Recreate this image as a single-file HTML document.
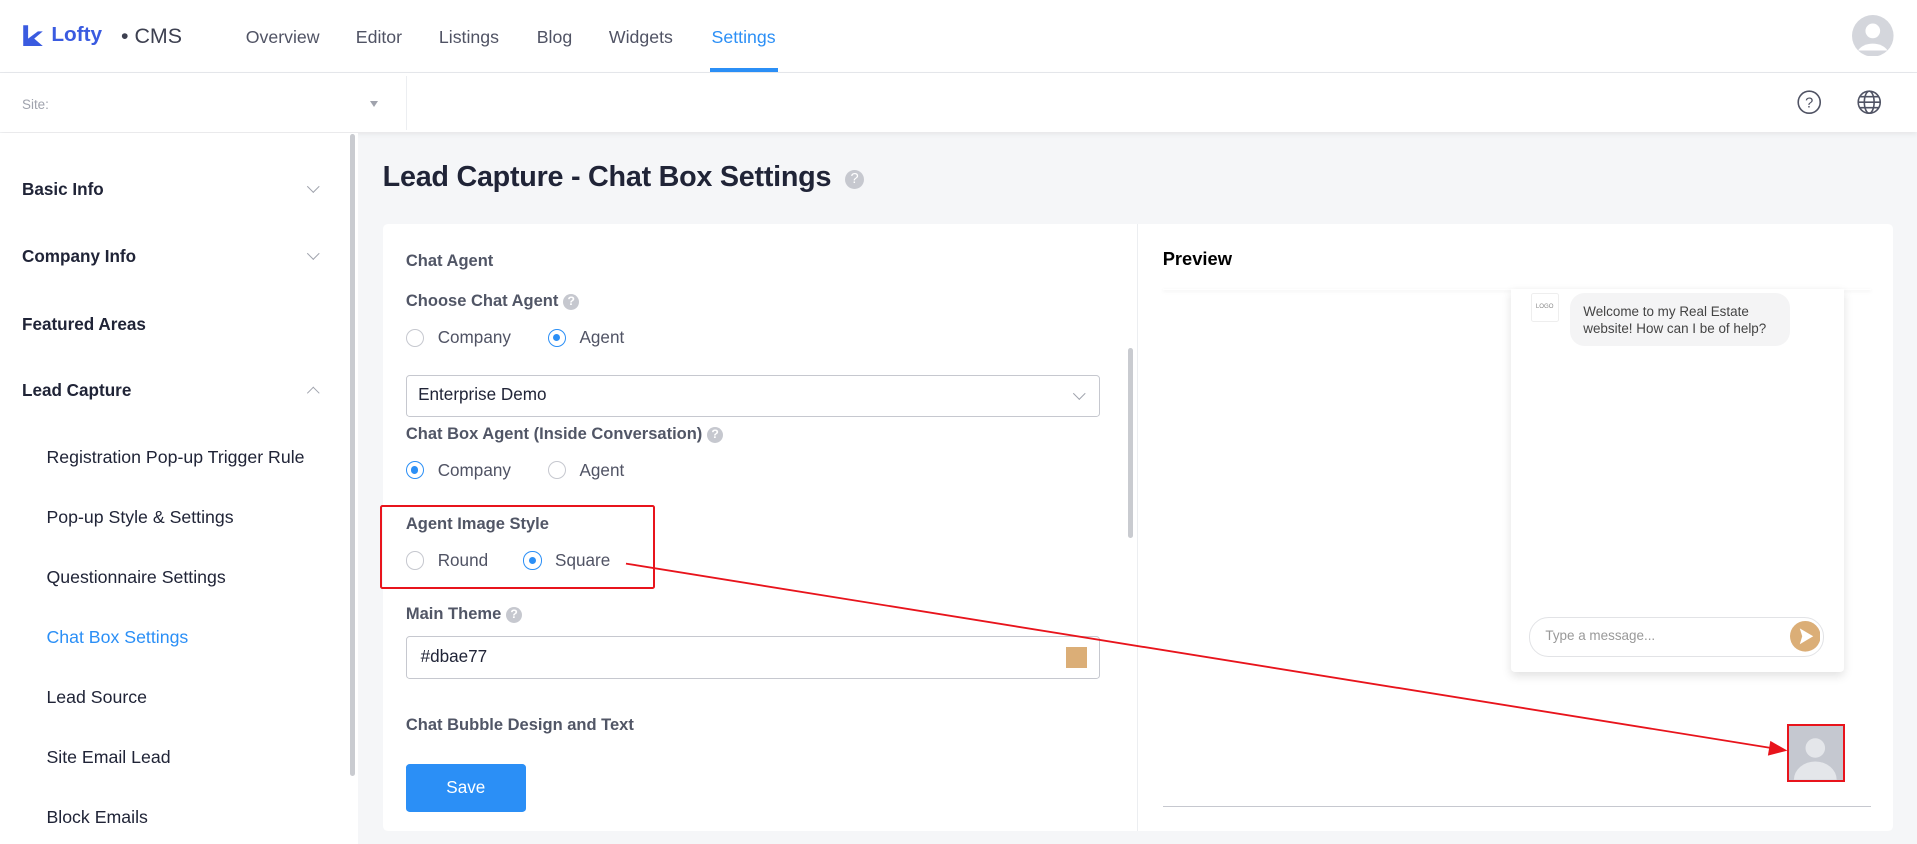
<!DOCTYPE html>
<html><head><meta charset="utf-8"><style>
*{box-sizing:border-box;margin:0;padding:0}
html,body{width:1917px;height:844px;overflow:hidden;background:#f5f6f8}
#w{zoom:1.2226;width:1568px;height:691px;position:relative;font-family:"Liberation Sans",sans-serif;color:#202437}
.a{position:absolute;white-space:nowrap}
.nav{font-size:14.5px;color:#505364;top:22px}
.sb{left:18px;font-size:14px;font-weight:bold;color:#202437}
.sub{left:38px;font-size:14.5px;color:#202437}
.lbl{font-size:13.5px;font-weight:bold;color:#515666;left:332px}
.q{display:inline-block;width:13px;height:13px;border-radius:50%;background:#c6c8cf;color:#fff;font-size:10px;text-align:center;line-height:13px;vertical-align:middle;margin-left:4px}
.r{position:absolute;width:15px;height:15px;border-radius:50%;border:1px solid #c6c8cf;background:#fff}
.r.on{border-color:#2b8ff6}
.r.on::after{content:"";position:absolute;left:3.5px;top:3.5px;width:6px;height:6px;border-radius:50%;background:#2b8ff6}
.rt{font-size:14px;color:#505364}
.chev{position:absolute;width:7px;height:7px;border-right:1.3px solid #a0a3ad;border-bottom:1.3px solid #a0a3ad}
</style></head><body><div id="w">
<div class="a" style="left:0;top:0;width:1568px;height:60px;background:#fff;border-bottom:1px solid #e6e8ec"></div>
<svg class="a" style="left:18px;top:20px" width="18" height="18" viewBox="0 0 18 18"><path d="M1 1h4v11l8-6h4l-7 6 7 6H1z" fill="#3a5be0"/></svg>
<div class="a" style="left:42px;top:19px;font-size:17px;font-weight:bold;color:#3a5be0">Lofty</div>
<div class="a" style="left:99px;top:20px;font-size:17.5px;color:#3d4050">• CMS</div>
<div class="a nav" style="left:201px">Overview</div>
<div class="a nav" style="left:291px">Editor</div>
<div class="a nav" style="left:359px">Listings</div>
<div class="a nav" style="left:439px">Blog</div>
<div class="a nav" style="left:498px">Widgets</div>
<div class="a nav" style="left:582px;color:#2b8ff6">Settings</div>
<div class="a" style="left:581px;top:56px;width:55px;height:3px;background:#2b8ff6"></div>
<svg class="a" style="left:1515px;top:12px" width="34" height="34"><circle cx="17" cy="17" r="17" fill="#d4d6dc"/><circle cx="17" cy="13" r="6" fill="#fff"/><path d="M5 29a13 9 0 0 1 24 0" fill="#fff"/></svg>
<div class="a" style="left:0;top:60px;width:1568px;height:48px;background:#fff;box-shadow:0 2px 4px rgba(0,0,0,.06)"></div>
<div class="a" style="left:18px;top:79px;font-size:11px;color:#a0a3ad">Site:</div>
<div class="a" style="left:303px;top:83px;border-left:4px solid transparent;border-right:4px solid transparent;border-top:5px solid #a0a3ad"></div>
<div class="a" style="left:332px;top:62px;width:1px;height:44px;background:#eceef1"></div>
<svg class="a" style="left:1470px;top:74px" width="20" height="20"><circle cx="10" cy="10" r="9" fill="none" stroke="#505364" stroke-width="1.3"/><text x="10" y="14.5" font-size="12" text-anchor="middle" fill="#505364" font-family="Liberation Sans">?</text></svg>
<svg class="a" style="left:1519px;top:74px" width="20" height="20" fill="none" stroke="#505364" stroke-width="1.3"><circle cx="10" cy="10" r="9"/><ellipse cx="10" cy="10" rx="4" ry="9"/><path d="M1 10h18M2.5 5.5h15M2.5 14.5h15"/></svg>
<div class="a" style="left:0;top:109px;width:293px;height:582px;background:#fff"></div>
<div class="a" style="left:286px;top:110px;width:4px;height:525px;background:#c9cbd0;border-radius:2px"></div>
<div class="a sb" style="top:147px">Basic Info</div><div class="chev" style="left:253px;top:149px;transform:rotate(45deg)"></div>
<div class="a sb" style="top:202px">Company Info</div><div class="chev" style="left:253px;top:204px;transform:rotate(45deg)"></div>
<div class="a sb" style="top:258px">Featured Areas</div>
<div class="a sb" style="top:312px">Lead Capture</div><div class="chev" style="left:253px;top:318px;transform:rotate(225deg)"></div>
<div class="a sub" style="top:366px">Registration Pop-up Trigger Rule</div>
<div class="a sub" style="top:415px">Pop-up Style &amp; Settings</div>
<div class="a sub" style="top:464px">Questionnaire Settings</div>
<div class="a sub" style="top:513px;color:#2b8ff6">Chat Box Settings</div>
<div class="a sub" style="top:562px">Lead Source</div>
<div class="a sub" style="top:611px">Site Email Lead</div>
<div class="a sub" style="top:660px">Block Emails</div>
<div class="a" style="left:313px;top:132px;font-size:23.5px;font-weight:bold;color:#202437;letter-spacing:-.2px">Lead Capture - Chat Box Settings</div>
<div class="a" style="left:691px;top:139px;width:16px;height:16px;border-radius:50%;background:#c6c8cf;color:#fff;font-size:12px;text-align:center;line-height:16px">?</div>
<div class="a" style="left:313px;top:183px;width:1235px;height:497px;background:#fff;border-radius:4px"></div>
<div class="a" style="left:930px;top:183px;width:1px;height:497px;background:#eceef1"></div>
<div class="a" style="left:923px;top:285px;width:4px;height:155px;background:#c9cbd0;border-radius:2px"></div>
<div class="a lbl" style="top:206px">Chat Agent</div>
<div class="a lbl" style="top:239px">Choose Chat Agent<span class="q">?</span></div>
<div class="r" style="left:332px;top:269px"></div><div class="a rt" style="left:358px;top:268px">Company</div>
<div class="r on" style="left:448px;top:269px"></div><div class="a rt" style="left:474px;top:268px">Agent</div>
<div class="a" style="left:332px;top:307px;width:568px;height:34px;border:1px solid #c6c8cf;border-radius:3px"></div>
<div class="a rt" style="left:342px;top:315px;color:#202437">Enterprise Demo</div>
<div class="chev" style="left:879px;top:318px;transform:rotate(45deg)"></div>
<div class="a lbl" style="top:348px">Chat Box Agent (Inside Conversation)<span class="q">?</span></div>
<div class="r on" style="left:332px;top:377px"></div><div class="a rt" style="left:358px;top:377px">Company</div>
<div class="r" style="left:448px;top:377px"></div><div class="a rt" style="left:474px;top:377px">Agent</div>
<div class="a" style="left:311px;top:413px;width:225px;height:69px;border:2px solid #e8141c;border-radius:2px"></div>
<div class="a lbl" style="top:421px">Agent Image Style</div>
<div class="r" style="left:332px;top:451px"></div><div class="a rt" style="left:358px;top:451px">Round</div>
<div class="r on" style="left:428px;top:451px"></div><div class="a rt" style="left:454px;top:451px">Square</div>
<div class="a lbl" style="top:495px">Main Theme<span class="q">?</span></div>
<div class="a" style="left:332px;top:520px;width:568px;height:35px;border:1px solid #c6c8cf;border-radius:3px"></div>
<div class="a rt" style="left:344px;top:529px;color:#202437">#dbae77</div>
<div class="a" style="left:872px;top:529px;width:17px;height:17px;background:#dbae77"></div>
<div class="a lbl" style="top:586px">Chat Bubble Design and Text</div>
<div class="a" style="left:332px;top:625px;width:98px;height:39px;background:#2b8ff6;border-radius:3px;color:#fff;font-size:14px;text-align:center;line-height:39px">Save</div>
<div class="a" style="left:951px;top:203px;font-size:15px;font-weight:bold;color:#000">Preview</div>
<div class="a" style="left:951px;top:236px;width:579px;height:1px;box-shadow:0 1px 3px rgba(0,0,0,.12)"></div>
<div class="a" style="left:1236px;top:236px;width:272px;height:314px;background:#fff;box-shadow:0 3px 8px rgba(0,0,0,.12);border-radius:0 0 3px 3px"></div>
<div class="a" style="left:1252px;top:240px;width:23px;height:23px;border:1px solid #eee;border-radius:2px;font-size:5px;color:#888;text-align:center;line-height:21px">LOGO</div>
<div class="a" style="left:1284px;top:240px;width:180px;height:43px;background:#f4f4f5;border-radius:12px;font-size:11px;color:#444;padding:8px 11px;line-height:14px;white-space:normal">Welcome to my Real Estate website! How can I be of help?</div>
<div class="a" style="left:1251px;top:505px;width:241px;height:32px;border:1px solid #e2e3e6;border-radius:16px"></div>
<div class="a" style="left:1264px;top:514px;font-size:11px;color:#999">Type a message...</div>
<svg class="a" style="left:1464px;top:508px" width="25" height="25"><circle cx="12.5" cy="12.5" r="12.5" fill="#dbae77"/><path d="M8 6l11 6.5L8 19l2-6.5z" fill="#fff"/></svg>
<div class="a" style="left:1462px;top:592px;width:47px;height:48px;border:2px solid #e8141c;background:#c5c8d0;overflow:hidden">
<svg width="43" height="44"><circle cx="21.5" cy="18" r="8" fill="#e4e6ea"/><path d="M4 44a17.5 15 0 0 1 35 0z" fill="#e4e6ea"/></svg></div>
<div class="a" style="left:951px;top:659px;width:579px;height:1px;background:#c6c8cf"></div>
<svg class="a" style="left:0;top:0" width="1568" height="691"><line x1="512" y1="461" x2="1450" y2="612" stroke="#e8141c" stroke-width="1.5"/><path d="M1462 614l-14-8 -2 12z" fill="#e8141c"/></svg>
</div></body></html>
